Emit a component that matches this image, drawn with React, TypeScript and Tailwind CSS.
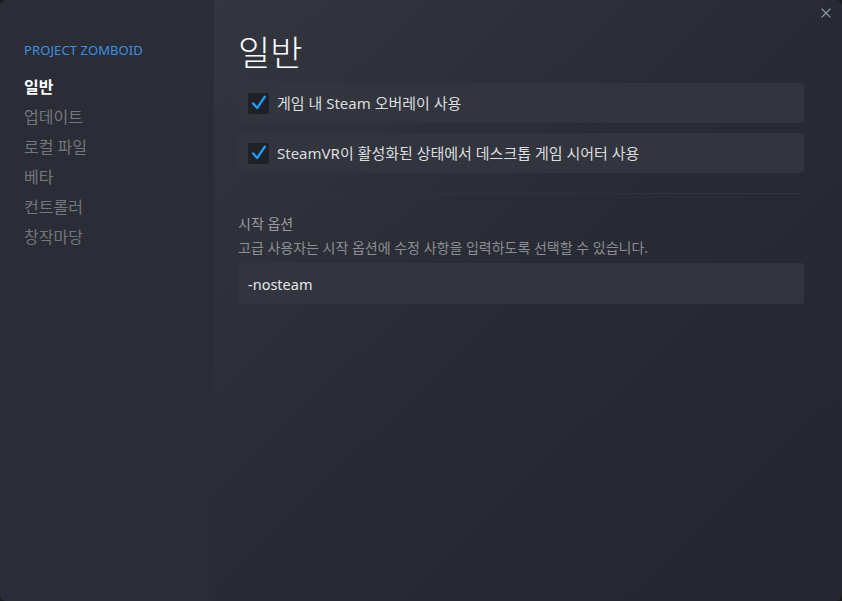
import { X } from 'lucide-react';

const NAV = ['일반', '업데이트', '로컬 파일', '베타', '컨트롤러', '창작마당'];

function CheckRow({ label }: { label: string }) {
  return (
    <label className="flex h-10 items-center gap-2 rounded-[3px] bg-[#32353e] px-[10px]">
      <span className="flex h-[21px] w-[21px] shrink-0 items-center justify-center rounded-[2px] bg-[#1f2127]">
        <svg viewBox="0 0 20 20" className="h-[18px] w-[18px]" aria-hidden="true">
          <path
            d="M3.5 10.5 L8 15.5 L16.5 3"
            fill="none"
            stroke="#1a9fff"
            strokeWidth="2.6"
            strokeLinecap="round"
            strokeLinejoin="round"
          />
        </svg>
      </span>
      <span className="text-[15px] leading-none text-[#dcdedf]">{label}</span>
    </label>
  );
}

export default function App() {
  return (
    <div
      className="h-[601px] w-[842px] bg-[#1b1b1d]"
      style={{ fontFamily: '"Noto Sans", "Noto Sans CJK KR", sans-serif' }}
    >
      <div className="relative flex h-full overflow-hidden rounded-[6px]">
        <aside className="flex w-[214px] shrink-0 flex-col bg-[#2a2d35] pl-6 pt-[42px]">
          <p className="text-[13px] leading-4 tracking-[0.1px] text-[#3d8fe0]">PROJECT ZOMBOID</p>
          <nav className="mt-[14px] flex flex-col">
            {NAV.map((item, i) => (
              <span
                key={item}
                className={`h-[30px] text-[16px] leading-[30px] ${
                  i === 0 ? 'font-bold text-white' : 'text-[#74777d]'
                }`}
              >
                {item}
              </span>
            ))}
          </nav>
        </aside>
        <main className="flex-1 bg-gradient-to-br from-[#33363f] via-[#282b33] to-[#23262e] pl-6 pr-[38px] pt-[31px]">
          <h1 className="h-[52px] text-[35px] font-light leading-[44px] text-white">일반</h1>
          <div className="flex flex-col gap-[10px]">
            <CheckRow label="게임 내 Steam 오버레이 사용" />
            <CheckRow label="SteamVR이 활성화된 상태에서 데스크톱 게임 시어터 사용" />
          </div>
          <div className="mt-5 h-px bg-[#30333b]" />
          <p className="mt-[20px] text-[14px] leading-5 text-[#9a9ca2]">시작 옵션</p>
          <p className="mt-[5px] text-[14px] leading-[18px] text-[#8b8e94]">
            고급 사용자는 시작 옵션에 수정 사항을 입력하도록 선택할 수 있습니다.
          </p>
          <input
            defaultValue="-nosteam"
            className="mt-[6px] h-[41px] w-full rounded-[3px] bg-[#32353e] px-[10px] text-[14.5px] text-[#e6e7e9] outline-none"
          />
        </main>
        <button
          type="button"
          aria-label="Close"
          className="absolute right-[8px] top-[5px] flex h-4 w-4 items-center justify-center text-[#8e9aa4]"
        >
          <X className="h-4 w-4" strokeWidth={1.6} />
        </button>
      </div>
    </div>
  );
}
